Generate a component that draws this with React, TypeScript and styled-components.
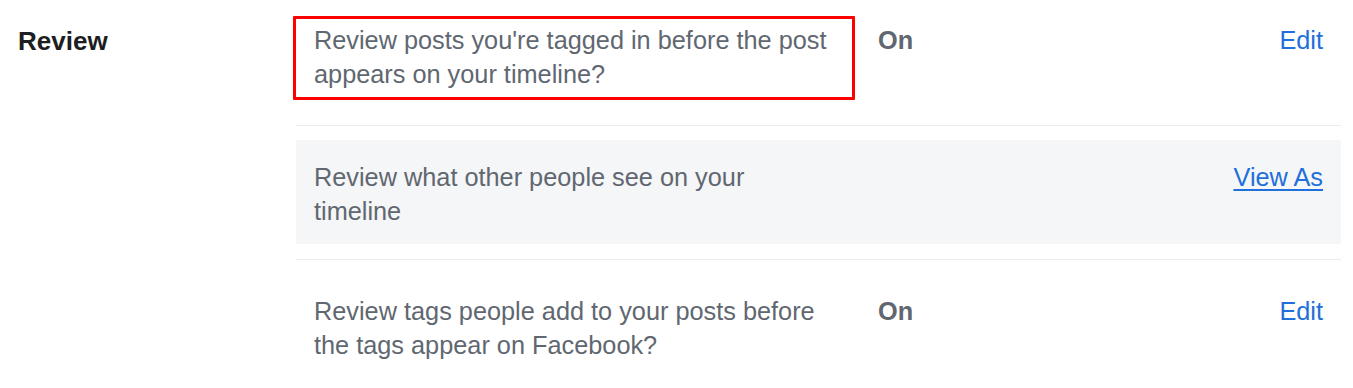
import React from "react";
import styled, { createGlobalStyle } from "styled-components";

const GlobalStyle = createGlobalStyle`
  html, body {
    margin: 0;
    padding: 0;
    background: #ffffff;
  }
  body {
    font-family: "Liberation Sans", Helvetica, Arial, sans-serif;
    -webkit-font-smoothing: antialiased;
  }
`;

const Page = styled.div`
  display: grid;
  grid-template-columns: 278px 1fr;
  padding: 0 12px 0 18px;
  width: 1353px;
  box-sizing: border-box;
`;

const SectionLabel = styled.div`
  padding-top: 24px;
  font-size: 26px;
  line-height: 34.3px;
  font-weight: 700;
  color: #1c1e21;
`;

const List = styled.div`
  display: flex;
  flex-direction: column;
`;

const Item = styled.div`
  padding: 14px 0 15px;
  border-top: 1px solid #e9ebee;

  &:first-child {
    padding: 3px 0 17px;
    border-top: none;
  }
`;

const Row = styled.div<{ $shaded?: boolean }>`
  display: grid;
  grid-template-columns: 520px 44px auto 1fr;
  align-items: start;
  padding: 20px 18px 16px;
  background: ${(p) => (p.$shaded ? "#f5f6f7" : "transparent")};
  font-size: 25.3px;
  line-height: 34.3px;
`;

const Description = styled.div<{ $highlighted?: boolean }>`
  position: relative;
  color: #606770;

  ${(p) =>
    p.$highlighted &&
    `
    &::before {
      content: "";
      position: absolute;
      left: -21.5px;
      right: -20.5px;
      top: -7px;
      bottom: -8.5px;
      border: 3px solid #ff0000;
      border-radius: 1px;
      pointer-events: none;
    }
  `}
`;

const Status = styled.div`
  grid-column: 3;
  font-weight: 700;
  color: #606770;
`;

const Action = styled.a<{ $underline?: boolean }>`
  grid-column: 4;
  justify-self: end;
  color: #216fdb;
  text-decoration: ${(p) => (p.$underline ? "underline" : "none")};
  text-decoration-thickness: 2px;
  text-underline-offset: 3px;
  cursor: pointer;
`;

type Setting = {
  text: string;
  status?: string;
  action: string;
  shaded?: boolean;
  highlighted?: boolean;
  underline?: boolean;
};

const settings: Setting[] = [
  {
    text: "Review posts you're tagged in before the post appears on your timeline?",
    status: "On",
    action: "Edit",
    highlighted: true,
  },
  {
    text: "Review what other people see on your timeline",
    action: "View As",
    shaded: true,
    underline: true,
  },
  {
    text: "Review tags people add to your posts before the tags appear on Facebook?",
    status: "On",
    action: "Edit",
  },
];

export default function App() {
  return (
    <>
      <GlobalStyle />
      <Page>
        <SectionLabel>Review</SectionLabel>
        <List>
          {settings.map((s, i) => (
            <Item key={i}>
              <Row $shaded={s.shaded}>
                <Description $highlighted={s.highlighted}>{s.text}</Description>
                {s.status && <Status>{s.status}</Status>}
                <Action $underline={s.underline}>{s.action}</Action>
              </Row>
            </Item>
          ))}
        </List>
      </Page>
    </>
  );
}
